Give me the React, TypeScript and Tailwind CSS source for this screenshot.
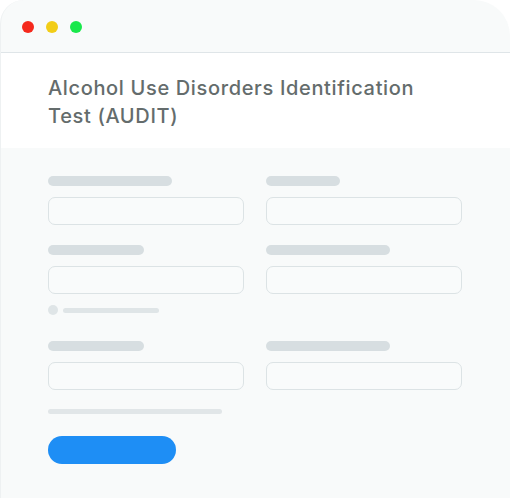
import React from "react";

function Field({ label }: { label: string }) {
  return (
    <div className="flex flex-col">
      <div className={`h-[10px] rounded-full bg-[#d7dee1] ${label}`} />
      <div className="mt-[11px] h-[28px] rounded-[7px] border border-[#dce3e5] bg-[#f9fbfb]" />
    </div>
  );
}

export default function App() {
  return (
    <div className="w-[510px] h-[498px] bg-white">
      <div className="w-[510px] h-[498px] rounded-tl-[24px] rounded-tr-[36px] overflow-hidden bg-[#f8fafa] border-l border-[#eef1f2] flex flex-col">
        <div className="h-[53px] shrink-0 border-b border-[#dfe5e8] flex items-center gap-[12px] pl-[21px] pt-[2px]">
          <span className="w-[12px] h-[12px] rounded-full bg-[#f5291c]" />
          <span className="w-[12px] h-[12px] rounded-full bg-[#f2cd17]" />
          <span className="w-[12px] h-[12px] rounded-full bg-[#19e84b]" />
        </div>
        <div className="h-[95px] shrink-0 bg-white pl-[47px] pt-[21px]">
          <div className="text-[20px] leading-[28px] font-medium text-[#646c6c] tracking-[0.65px]" style={{ fontFamily: "Inter, 'Noto Sans', sans-serif" }}>
            Alcohol Use Disorders Identification
            <br />
            Test (AUDIT)
          </div>
        </div>
        <div className="flex-1 pl-[47px] pt-[28px]">
          <div className="grid grid-cols-[196px_196px] gap-x-[22px]">
            <Field label="w-[124px]" />
            <Field label="w-[74px]" />
          </div>
          <div className="grid grid-cols-[196px_196px] gap-x-[22px] mt-[20px]">
            <Field label="w-[96px]" />
            <Field label="w-[124px]" />
          </div>
          <div className="flex items-center gap-[5px] mt-[11px]">
            <span className="w-[10px] h-[10px] rounded-full bg-[#dfe5e7]" />
            <span className="w-[96px] h-[5px] rounded-full bg-[#dfe5e7]" />
          </div>
          <div className="grid grid-cols-[196px_196px] gap-x-[22px] mt-[26px]">
            <Field label="w-[96px]" />
            <Field label="w-[124px]" />
          </div>
          <div className="w-[174px] h-[5px] rounded-full bg-[#e1e6e8] mt-[19px]" />
          <div className="w-[128px] h-[28px] rounded-full bg-[#1e8ef5] mt-[22px]" />
        </div>
      </div>
    </div>
  );
}
